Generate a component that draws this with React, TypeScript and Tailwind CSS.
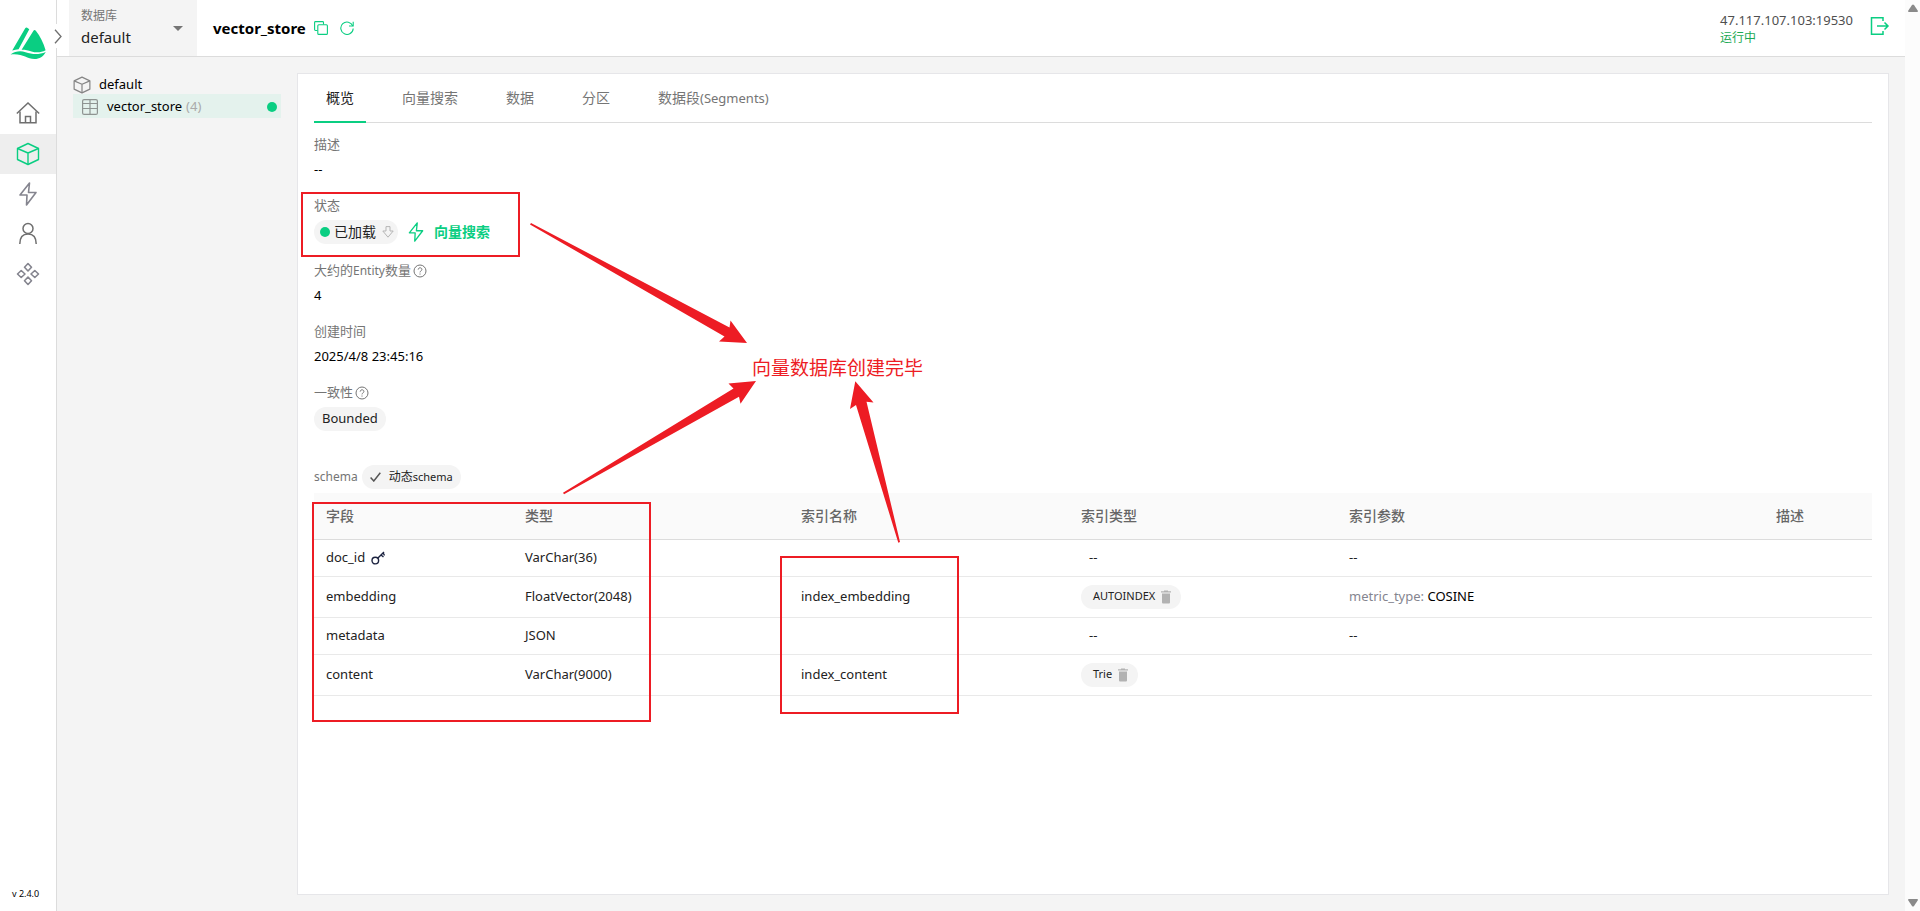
import React from "react";

interface Field {
  name: string;
  primary?: boolean;
  type: string;
  indexName: string;
  indexType: string;
  params: { key: string; value: string } | null;
  emptyParams?: boolean;
}

const fields: Field[] = [
  { name: "doc_id", primary: true, type: "VarChar(36)", indexName: "", indexType: "", params: null, emptyParams: true },
  { name: "embedding", type: "FloatVector(2048)", indexName: "index_embedding", indexType: "AUTOINDEX", params: { key: "metric_type:", value: "COSINE" } },
  { name: "metadata", type: "JSON", indexName: "", indexType: "", params: null, emptyParams: true },
  { name: "content", type: "VarChar(9000)", indexName: "index_content", indexType: "Trie", params: null },
];

const columns = [
  { label: "字段", width: "w-[199px]" },
  { label: "类型", width: "w-[276px]" },
  { label: "索引名称", width: "w-[280px]" },
  { label: "索引类型", width: "w-[268px]" },
  { label: "索引参数", width: "w-[427px]" },
  { label: "描述", width: "w-[108px]" },
];

const tabs = ["概览", "向量搜索", "数据", "分区"];

const Logo = () => (
  <svg width="36" height="34" viewBox="0 0 36 34" fill="#0ace82">
    <path d="M15.200 2.200 Q16.200 0.800 17.200 1.800 L19.300 3.300 L8.600 23.200 C6.500 23.300 4.500 23.700 2.200 24.500 Z" />
    <path d="M23.300 5 Q24.500 3.200 26 5 C30 10 33.500 17 35.600 24.200 C31 26.700 26 26.700 21.500 25.400 C18 24.300 15 23.600 11.600 23.700 Z" />
    <path d="M0.500 28.500 C5 25.300 10.500 24.600 15.500 26.200 C22.500 28.600 29 28.800 35.800 26 C33.500 30.500 29.500 33 24.500 33 C16.500 33 12.500 27 0.500 28.500 Z" />
  </svg>
);

const HomeIcon = () => (
  <svg width="24" height="24" viewBox="0 0 24 24" fill="none" stroke="#6f6f6f" strokeWidth="1.5">
    <path d="M0.800 11.500 L12 1 L23.200 11.500" />
    <path d="M4 9.500 V20.800 H20 V9.500" />
    <path d="M9.500 20.800 V14.500 H14.500 V20.800" />
  </svg>
);

const CubeIcon = ({ size, color, width }: { size: number; color: string; width: number }) => (
  <svg width={size} height={size} viewBox="0 0 24 24" fill="none" stroke={color} strokeWidth={width} strokeLinejoin="round">
    <path d="M12 1.500 L22.500 6.500 V17.500 L12 22.500 L1.500 17.500 V6.500 Z" />
    <path d="M1.500 6.500 L12 11 L22.500 6.500 M12 11 V22.500" />
  </svg>
);

const BoltIcon = ({ size, color, width }: { size: number; color: string; width: number }) => (
  <svg width={size} height={size} viewBox="0 0 24 24" fill="none" stroke={color} strokeWidth={width} strokeLinejoin="round">
    <path d="M13.500 1 L4 13 H11 L10.500 23 L20 10.500 H12.500 Z" />
  </svg>
);

const UserIcon = () => (
  <svg width="24" height="24" viewBox="0 0 24 24" fill="none" stroke="#6f6f6f" strokeWidth="1.5">
    <circle cx="12" cy="6.500" r="5" />
    <path d="M3.800 22 C3.800 15.500 7 12 12 12 C17 12 20.200 15.500 20.200 22" />
  </svg>
);

const NodesIcon = () => (
  <svg width="24" height="24" viewBox="0 0 24 24" fill="none" stroke="#85858f" strokeWidth="1.6" strokeLinejoin="round">
    <path d="M12 1.500 L15.500 5.200 L12 9 L8.500 5.200 Z" />
    <path d="M12 15 L15.500 18.800 L12 22.500 L8.500 18.800 Z" />
    <path d="M5.200 8.500 L9 12 L5.200 15.500 L1.500 12 Z" />
    <path d="M18.800 8.500 L22.500 12 L18.800 15.500 L15 12 Z" />
  </svg>
);

const GridIcon = () => (
  <svg width="16" height="16" viewBox="0 0 16 16" fill="none" stroke="#8f9492" strokeWidth="1.2">
    <rect x="0.600" y="0.600" width="14.800" height="14.800" rx="1.500" />
    <path d="M0.600 4.500 H15.400 M0.600 9.500 H15.400 M8 0.600 V15.400" />
  </svg>
);

const CopyIcon = () => (
  <svg width="14" height="14" viewBox="0 0 14 14" fill="none" stroke="#0ace82" strokeWidth="1.1">
    <path d="M3.500 9.500 H1.500 Q0.600 9.500 0.600 8.600 V1.500 Q0.600 0.600 1.500 0.600 H8.600 Q9.500 0.600 9.500 1.500 V3.500" />
    <rect x="3.800" y="3.800" width="9.600" height="9.600" rx="1" />
  </svg>
);

const RefreshIcon = () => (
  <svg width="14" height="14" viewBox="0 0 14 14" fill="none" stroke="#0ace82" strokeWidth="1.1">
    <path d="M12.800 5 A6.200 6.200 0 1 0 13.200 7.500" />
    <path d="M13.200 0.800 V5 H9" />
  </svg>
);

const LogoutIcon = () => (
  <svg width="20" height="18" viewBox="0 0 20 18" fill="none" stroke="#0ace82" strokeWidth="1.5">
    <path d="M13 4 V0.800 H1.500 V17.200 H13 V14" />
    <path d="M7 9 H18 M14.500 5.500 L18 9 L14.500 12.500" />
  </svg>
);

const HelpIcon = () => (
  <svg width="14" height="14" viewBox="0 0 14 14" fill="none" stroke="#757575" strokeWidth="1">
    <circle cx="7" cy="7" r="6" />
    <path d="M5.200 5.600 C5.200 3.200 8.900 3.200 8.900 5.500 C8.900 6.900 7 6.900 7 8.400" />
    <path d="M7 9.500 V10.600" />
  </svg>
);

const ReleaseIcon = () => (
  <svg width="12" height="12" viewBox="0 0 12 12" fill="none" stroke="#b5b5b5" strokeWidth="1">
    <path d="M4 0.600 H8 V5 H11.200 L6 11.200 L0.800 5 H4 Z" />
  </svg>
);

const KeyIcon = () => (
  <svg width="14" height="14" viewBox="0 0 14 14" fill="none" stroke="#1c2340" strokeWidth="1.4">
    <circle cx="4.300" cy="9.600" r="3.300" />
    <path d="M6.700 7.200 L13 1 M10 4 L12.500 6 M12 1.500 L13.500 4.500" />
  </svg>
);

const TrashIcon = () => (
  <svg width="10" height="14" viewBox="0 0 10 14" fill="#b2b2b2">
    <path d="M3 0.500 H7 V1.200 H10 V2.500 H0 V1.200 H3 Z" />
    <path d="M1 3.500 H9 V12.500 Q9 13.500 8 13.500 H2 Q1 13.500 1 12.500 Z" />
  </svg>
);

const navItems = [
  { label: "首页", icon: <HomeIcon /> },
  { label: "数据库", icon: <CubeIcon size={24} color="#0ace82" width={1.4} />, active: true },
  { label: "搜索", icon: <BoltIcon size={24} color="#85858f" width={1.6} /> },
  { label: "用户", icon: <UserIcon /> },
  { label: "系统", icon: <NodesIcon /> },
];

const Sidebar = () => (
  <aside className="relative flex w-[57px] shrink-0 flex-col border-r border-[#dcdcdc] bg-white">
    <div className="flex h-[94px] justify-center pt-[26px]">
      <Logo />
    </div>
    <button aria-label="展开" className="absolute top-6 -right-2.5 flex h-6 w-4 items-center justify-center bg-white">
      <svg width="8" height="15" viewBox="0 0 8 15" fill="none" stroke="#6f6f6f" strokeWidth="1.3">
        <path d="M1 0.800 L7 7.500 L1 14.200" />
      </svg>
    </button>
    <nav className="flex flex-col">
      {navItems.map((item) => (
        <a
          key={item.label}
          href="#"
          aria-label={item.label}
          className={`flex h-10 items-center justify-center ${item.active ? "bg-[#eeeeee]" : ""}`}
        >
          {item.icon}
        </a>
      ))}
    </nav>
    <p className="mt-auto pb-[9px] pl-3 text-[9px] leading-4 text-black">v 2.4.0</p>
  </aside>
);

const Header = () => (
  <header className="flex h-[57px] shrink-0 border-b border-[#dcdcdc] bg-white pl-3">
    <div className="relative flex w-32 flex-col bg-[#f4f4f4]">
      <label htmlFor="database" className="pt-2 pl-3 text-xs leading-4 text-[#757575]">
        数据库
      </label>
      <select id="database" className="h-[26px] w-full appearance-none pl-3 text-[15px] text-[#222222]">
        <option>default</option>
      </select>
      <svg className="pointer-events-none absolute top-[26px] right-3.5" width="10" height="5" viewBox="0 0 10 5" fill="#757575">
        <path d="M0 0 H10 L5 5 Z" />
      </svg>
    </div>
    <div className="flex items-center pl-4">
      <h1 className="text-[15px] font-bold text-black">vector_store</h1>
      <button aria-label="复制" className="ml-2"><CopyIcon /></button>
      <button aria-label="刷新" className="ml-3"><RefreshIcon /></button>
    </div>
    <div className="ml-auto flex gap-[17px] pt-3 pr-[15px]">
      <div className="flex flex-col">
        <span className="text-[13px] leading-4 text-[#4f4f4f]">47.117.107.103:19530</span>
        <span className="text-xs leading-5 text-[#1ba954]">运行中</span>
      </div>
      <button aria-label="断开连接" className="self-start pt-[5px]"><LogoutIcon /></button>
    </div>
  </header>
);

const Tree = () => (
  <ul className="flex w-[208px] shrink-0 flex-col text-[13px] text-black">
    <li className="flex h-[21px] items-center gap-2 pt-0.5">
      <CubeIcon size={18} color="#858585" width={1.6} />
      <span>default</span>
    </li>
    <li className="flex h-6 items-center bg-[#e4f2ed] pt-px pr-1 pl-[9px]">
      <GridIcon />
      <span className="ml-[9px]">vector_store</span>
      <span className="ml-1 text-[#aaaaaa]">(4)</span>
      <span className="ml-auto size-2.5 rounded-full bg-[#0ace82]" />
    </li>
  </ul>
);

const InfoBlock = ({ label, help, children }: { label: React.ReactNode; help?: boolean; children: React.ReactNode }) => (
  <div className="flex flex-col gap-1">
    <div className="flex h-[21px] items-center gap-0.5 text-[13px] text-[#757575]">
      <span>{label}</span>
      {help && <HelpIcon />}
    </div>
    {children}
  </div>
);

const SchemaTable = () => (
  <table className="mt-1 w-full table-fixed border-collapse text-left text-[13px] text-[#222222]">
    <thead>
      <tr className="h-[46px] border-b border-[#dcdcdc] bg-[#fafafa]">
        {columns.map((col) => (
          <th key={col.label} className={`px-3 text-sm font-medium text-[#666666] ${col.width}`}>
            {col.label}
          </th>
        ))}
      </tr>
    </thead>
    <tbody>
      {fields.map((field) => (
        <tr key={field.name} className={`border-b border-[#e9e9e9] ${field.indexType ? "h-[41px]" : "h-[37px]"}`}>
          <td className="px-3">
            <span className="flex items-center gap-1.5">
              {field.name}
              {field.primary && <KeyIcon />}
            </span>
          </td>
          <td className="px-3">{field.type}</td>
          <td className="px-3">{field.indexName}</td>
          <td className="px-3">
            {field.indexType ? (
              <span className="inline-flex h-6 items-center gap-1.5 rounded-full bg-[#f4f4f4] pr-2.5 pl-3 align-middle text-[11px]">
                {field.indexType}
                <button aria-label="删除索引"><TrashIcon /></button>
              </span>
            ) : (
              <span className="pl-2">--</span>
            )}
          </td>
          <td className="px-3">
            {field.params && (
              <>
                <span className="text-[#85858f]">{field.params.key}</span>{" "}
                <span className="text-black">{field.params.value}</span>
              </>
            )}
            {field.emptyParams && "--"}
          </td>
          <td className="px-3"></td>
        </tr>
      ))}
    </tbody>
  </table>
);

// Red marks drawn over the page
const Annotations = () => (
  <div className="pointer-events-none absolute inset-0">
    <div className="absolute top-[192px] left-[301px] h-[65px] w-[219px] border-2 border-[#ed1c24]" />
    <div className="absolute top-[502px] left-[312px] h-[220px] w-[339px] border-2 border-[#ed1c24]" />
    <div className="absolute top-[556px] left-[780px] h-[158px] w-[179px] border-2 border-[#ed1c24]" />
    <svg className="absolute top-[200px] left-[500px]" width="460" height="360" viewBox="500 200 460 360" fill="#ed1c24">
      <path d="M530 224.500 L531 223 L729.500 327.500 L730.500 320.500 L747 343 L719 341.500 L724.500 336.500 Z" />
      <path d="M563 492.800 L733.500 388.500 L728.500 383.500 L756 381 L740.500 403.800 L739 396.800 L564 494.300 Z" />
      <path d="M898.300 542.800 L856 405 L850 409 L855.300 381.300 L873.500 402.500 L866.500 401.800 L900 542 Z" />
    </svg>
    <p className="absolute top-[354px] left-[752px] text-[19px] leading-7 whitespace-nowrap text-[#ed1c24]">
      向量数据库创建完毕
    </p>
  </div>
);

const App: React.FC = () => {
  return (
    <div className="relative flex min-h-screen bg-[#f4f4f4] font-['Noto_Sans','Noto_Sans_CJK_SC',sans-serif]">
      <Sidebar />
      <div className="flex min-w-0 flex-1 flex-col">
        <Header />
        <main className="flex flex-1 gap-4 p-4">
          <Tree />
          <section className="flex min-w-0 flex-1 flex-col border border-[#e6e6e9] bg-white px-4">
            <div role="tablist" className="flex gap-6 border-b border-[#dcdcdc] text-sm text-[#757575]">
              {tabs.map((tab, i) => (
                <button
                  key={tab}
                  role="tab"
                  className={`-mb-px h-[49px] border-b-2 px-3 ${i === 0 ? "border-[#0ace82] text-[#222222]" : "border-transparent"}`}
                >
                  {tab}
                </button>
              ))}
              <button role="tab" className="-mb-px h-[49px] border-b-2 border-transparent px-3">
                数据段<span className="text-[13px]">(Segments)</span>
              </button>
            </div>
            <div className="mt-[11px] flex flex-col gap-4 text-[13px] text-black">
              <InfoBlock label="描述">
                <p className="leading-5">--</p>
              </InfoBlock>
              <InfoBlock label="状态">
                <div className="flex h-6 items-center text-sm">
                  <span className="flex h-6 items-center rounded-full bg-[#f4f4f4] pr-1 pl-1.5 text-[#222222]">
                    <span className="mr-1 size-2.5 rounded-full bg-[#0ace82]" />
                    已加载
                    <button aria-label="释放" className="ml-1.5"><ReleaseIcon /></button>
                  </span>
                  <button className="ml-2 flex items-center gap-2 font-bold text-[#0ace82]">
                    <BoltIcon size={20} color="#0ace82" width={1.6} />
                    向量搜索
                  </button>
                </div>
              </InfoBlock>
              <InfoBlock label={<>大约的<span className="text-xs">Entity</span>数量</>} help>
                <p className="leading-5">4</p>
              </InfoBlock>
              <InfoBlock label="创建时间">
                <p className="leading-5">2025/4/8 23:45:16</p>
              </InfoBlock>
              <InfoBlock label="一致性" help>
                <span className="flex h-6 items-center self-start rounded-full bg-[#f4f4f4] px-2 text-[#222222]">Bounded</span>
              </InfoBlock>
            </div>
            <div className="mt-[34px] flex items-center gap-1">
              <span className="text-xs text-[#757575]">schema</span>
              <span className="flex h-6 items-center gap-2 rounded-full bg-[#f4f4f4] px-2 text-xs text-[#222222]">
                <svg width="11" height="10" viewBox="0 0 11 10" fill="none" stroke="#555555" strokeWidth="1.5">
                  <path d="M0.600 5.500 L3.800 9 L10.300 0.800" />
                </svg>
                <span>动态<span className="text-[11px]">schema</span></span>
              </span>
            </div>
            <SchemaTable />
          </section>
        </main>
      </div>
      <div className="flex w-[15px] shrink-0 flex-col items-center justify-between bg-[#fcfcfc] py-1">
        <svg width="10" height="8" viewBox="0 0 10 8" fill="#8a8a8a">
          <path d="M4 1 Q5 0 6 1 L10 7 Q10 8 9 8 H1 Q0 8 0 7 Z" />
        </svg>
        <svg width="10" height="8" viewBox="0 0 10 8" fill="#8a8a8a">
          <path d="M4 7 Q5 8 6 7 L10 1 Q10 0 9 0 H1 Q0 0 0 1 Z" />
        </svg>
      </div>
      <Annotations />
    </div>
  );
};

export default App;
